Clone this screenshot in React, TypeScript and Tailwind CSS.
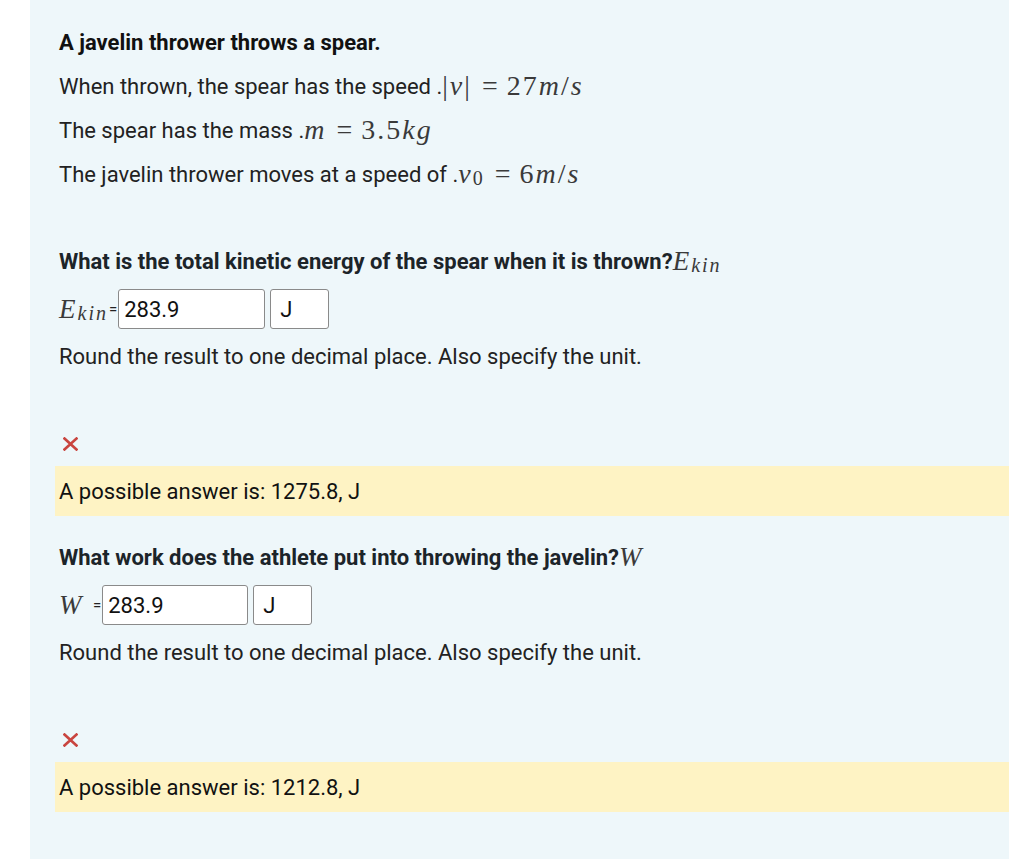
import type { ReactNode } from 'react'

const mathFont = { fontFamily: '"Liberation Serif", "Times New Roman", serif' }

function M({ children, className = 'text-[27px] tracking-[1px]' }: { children: ReactNode; className?: string }) {
  return (
    <span className={`${className} text-[#3a3a3a] whitespace-nowrap`} style={mathFont}>
      {children}
    </span>
  )
}

const I = ({ children }: { children: ReactNode }) => <i>{children}</i>
const Eq = () => <span className="ml-[10px] mr-[7px]">=</span>

function Ekin() {
  return (
    <M>
      <I>E</I>
      <sub className="text-[20px] italic tracking-[2px] relative top-[2px] ml-[1px]">kin</sub>
    </M>
  )
}

function Cross() {
  return (
    <svg width="15" height="14" viewBox="0 0 15 14" className="ml-[4px]">
      <path d="M1.5 1.5 L13.5 12.5 M13.5 1.5 L1.5 12.5" stroke="#c9453f" strokeWidth="2.6" strokeLinecap="square" />
    </svg>
  )
}

function Question({
  title,
  symbol,
  value,
  answer,
  valueWidth,
}: {
  title: ReactNode
  symbol: ReactNode
  value: string
  answer: string
  valueWidth: string
}) {
  return (
    <section className="flex flex-col">
      <h2 className="h-[44px] flex items-center font-bold text-[22px] text-[#1c2429]">{title}</h2>
      <div className="mt-[6px] flex h-[40px] items-center">
        {symbol}
        <span className="text-[15px] text-[#222] mx-[1px]">=</span>
        <input
          readOnly
          value={value}
          className={`h-[40px] ${valueWidth} rounded-[3px] border border-[#8a8a8a] bg-white px-[5px] text-[22px] text-[#111] outline-none`}
        />
        <input
          readOnly
          value="J"
          className="ml-[5px] h-[40px] w-[59px] rounded-[3px] border border-[#8a8a8a] bg-white px-[9px] text-[22px] text-[#111] outline-none"
        />
      </div>
      <p className="mt-[5px] h-[44px] flex items-center text-[22px] text-[#222]">
        Round the result to one decimal place. Also specify the unit.
      </p>
      <div className="mt-[59px] h-[14px] flex items-center">
        <Cross />
      </div>
      <div className="mt-[15px] -ml-[4px] h-[50px] flex items-center bg-[#fef3c4] pl-[4px] text-[22px] text-[#111]">
        A possible answer is: {answer}
      </div>
    </section>
  )
}

const big = 'text-[28px] tracking-[2px]'

export default function App() {
  return (
    <div className="min-h-[859px] bg-white pl-[30px]" style={{ fontFamily: 'Roboto, "Noto Sans", sans-serif' }}>
      <main className="min-h-[859px] bg-[#eef7fa] pl-[29px] pt-[20px]">
        <h1 className="h-[44px] flex items-center font-bold text-[22px] text-[#111]">A javelin thrower throws a spear.</h1>
        <p className="h-[44px] flex items-center text-[22px] text-[#222]">
          When thrown, the spear has the speed&nbsp;.
          <M className={big}>
            |<I>v</I>|<Eq />27<I>m</I>/<I>s</I>
          </M>
        </p>
        <p className="h-[44px] flex items-center text-[22px] text-[#222]">
          The spear has the mass&nbsp;.
          <M className={big}>
            <I>m</I>
            <Eq />
            3.5<I>kg</I>
          </M>
        </p>
        <p className="h-[44px] flex items-center text-[22px] text-[#222]">
          The javelin thrower moves at a speed of&nbsp;.
          <M className={big}>
            <I>v</I>
            <sub className="text-[20px] relative top-[2px]">0</sub>
            <Eq />
            6<I>m</I>/<I>s</I>
          </M>
        </p>

        <div className="mt-[43px] flex flex-col gap-[19px]">
          <Question
            title={
              <>
                What is the total kinetic energy of the spear when it is thrown?
                <span className="font-normal">
                  <Ekin />
                </span>
              </>
            }
            symbol={<Ekin />}
            value="283.9"
            answer="1275.8, J"
            valueWidth="w-[147px]"
          />
          <Question
            title={
              <>
                What work does the athlete put into throwing the javelin?
                <span className="font-normal">
                  <M>
                    <I>W</I>
                  </M>
                </span>
              </>
            }
            symbol={
              <M>
                <span className="inline-block w-[33px]">
                  <I>W</I>
                </span>
              </M>
            }
            value="283.9"
            answer="1212.8, J"
            valueWidth="w-[146px]"
          />
        </div>
      </main>
    </div>
  )
}
